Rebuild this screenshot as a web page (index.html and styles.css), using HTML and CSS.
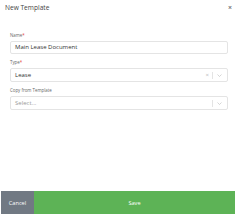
FILE: index.html
```html
<!DOCTYPE html>
<html>
<head>
<meta charset="utf-8">
<link rel="stylesheet" href="styles.css">
</head>
<body>
<div class="modal">
  <div class="header">
    <span class="title">New Template</span>
    <span class="close">&#215;</span>
  </div>
  <div class="form">
    <div class="group">
      <label class="label">Name<span class="req">*</span></label>
      <div class="input">Main Lease Document</div>
    </div>
    <div class="group">
      <label class="label">Type<span class="req">*</span></label>
      <div class="input select">
        <span class="value">Lease</span>
        <span class="clear">&#215;</span>
        <span class="sep"></span>
        <svg class="chev" width="5" height="3" viewBox="0 0 5 3"><path d="M0.5 0.5 L2.5 2.5 L4.5 0.5" fill="none" stroke="#bbb" stroke-width="0.6"/></svg>
      </div>
    </div>
    <div class="group">
      <label class="label">Copy from Template</label>
      <div class="input select">
        <span class="value placeholder">Select...</span>
        <span class="sep"></span>
        <svg class="chev" width="5" height="3" viewBox="0 0 5 3"><path d="M0.5 0.5 L2.5 2.5 L4.5 0.5" fill="none" stroke="#bbb" stroke-width="0.6"/></svg>
      </div>
    </div>
  </div>
  <div class="footer">
    <button class="btn cancel">Cancel</button>
    <button class="btn save">Save</button>
  </div>
</div>
</body>
</html>
```
FILE: styles.css
```css
html, body {
  margin: 0;
  padding: 0;
  background: #fff;
}
body {
  font-family: "Open Sans", "Liberation Sans", sans-serif;
  color: #333;
}
.modal {
  height: 216px;
  display: flex;
  flex-direction: column;
  box-sizing: border-box;
}
.header {
  display: flex;
  justify-content: space-between;
  align-items: center;
  height: 14px;
  padding: 0 6px 0 5px;
}
.title {
  font-size: 6.6px;
  color: #444;
}
.close {
  font-size: 7px;
  color: #777;
  font-weight: bold;
}
.form {
  padding: 18px 10px 0 10px;
  display: flex;
  flex-direction: column;
  gap: 5px;
}
.group {
  display: flex;
  flex-direction: column;
}
.label {
  font-size: 4.4px;
  line-height: 7px;
  color: #666;
  margin-bottom: 2px;
}
.req {
  color: #e53935;
}
.input {
  height: 13px;
  border: 1px solid #e4e4e4;
  border-radius: 2px;
  box-sizing: border-box;
  padding: 0 4px;
  font-size: 6px;
  line-height: 11px;
  color: #333;
  display: flex;
  align-items: center;
}
.select {
  height: 14px;
}
.value {
  flex: 1;
}
.placeholder {
  color: #999;
}
.clear {
  font-size: 6px;
  color: #bbb;
  margin-right: 3px;
}
.sep {
  width: 1px;
  height: 7px;
  background: #e4e4e4;
  margin-right: 4px;
}
.chev {
  margin-right: 1px;
}
.footer {
  margin-top: auto;
  display: flex;
  height: 23px;
  margin: auto 3px 2px 1px;
}
.btn {
  border: none;
  margin: 0;
  padding: 0;
  color: #fff;
  font-family: "Open Sans", "Liberation Sans", sans-serif;
  font-size: 5.6px;
  height: 100%;
}
.cancel {
  width: 33px;
  background: #717983;
}
.save {
  flex: 1;
  background: #5db356;
}
```
